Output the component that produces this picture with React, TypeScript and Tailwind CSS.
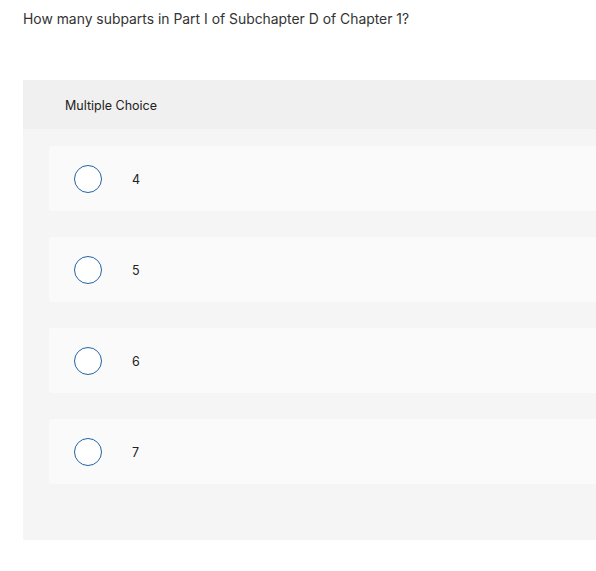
export default function App() {
  const options = ['4', '5', '6', '7'];
  return (
    <div className="w-[596px] h-[571px] overflow-hidden bg-white" style={{ fontFamily: 'Inter, "Noto Sans", sans-serif' }}>
      <p className="pl-[23px] pt-[9px] text-[13.9px] leading-[20px] text-[#333]">
        How many subparts in Part I of Subchapter D of Chapter 1?
      </p>
      <div className="ml-[23px] mr-[-40px] mt-[51px] bg-[#f5f5f5] rounded-b-[3px]">
        <div className="h-[49px] bg-[#f0f0f0] flex items-center pl-[42px] pt-[3px] text-[12.5px] text-[#222]">
          Multiple Choice
        </div>
        <div className="pt-[17px] pb-[56px] pl-[26px] flex flex-col gap-[26px]">
          {options.map((o) => (
            <div key={o} className="h-[65px] bg-[#fafafa] rounded-[3px] flex items-center pl-[25px]">
              <span className="w-[28px] h-[28px] rounded-full border border-[#2063a5] bg-white" />
              <span className="ml-[30px] pt-[3px] text-[12.5px] text-[#222]">{o}</span>
            </div>
          ))}
        </div>
      </div>
    </div>
  );
}
